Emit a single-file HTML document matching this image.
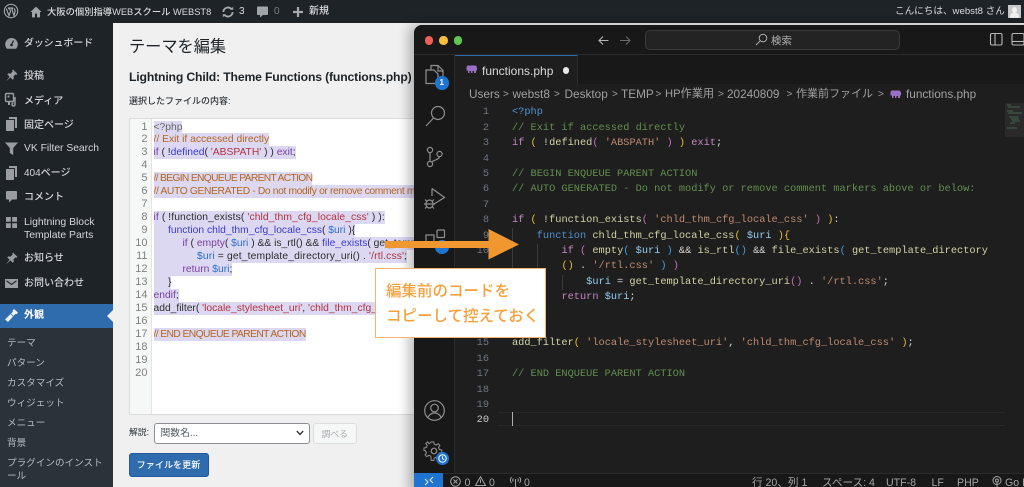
<!DOCTYPE html>
<html lang="ja"><head><meta charset="utf-8"><title>テーマを編集</title>
<style>
html,body{margin:0;padding:0;width:1024px;height:487px;overflow:hidden;background:#f0f0f1}
#p{position:relative;width:1024px;height:487px;overflow:hidden;font-family:"Liberation Sans","Noto Sans CJK JP",sans-serif;filter:blur(.3px)}
.a{position:absolute;white-space:nowrap}
svg{position:absolute;overflow:visible}
.t{color:#dcdcde;font-size:10px;line-height:14px}
.m{color:#d5d6d8;font-size:10px;line-height:14px;left:24px;font-weight:500}
.sub{color:#b4b9be;font-size:9.6px;line-height:14px;left:7px}
.ic{fill:#9a9ea3}
#wc{left:153.5px;top:120.5px;width:260px;overflow:hidden;font-size:10.3px;color:#2b2b2b}
#wc div{height:12.97px;line-height:12.97px;white-space:nowrap}
#wc span.sel{background:#dcd8f2;display:inline-block;height:13px;line-height:13px}
.wk{color:#7a3e9d}.wf{color:#3a3ad0}.wstr{color:#b3323f}.wcm{color:#b5651d}.wv{color:#2a6fc9}
#wn{left:129px;top:120.5px;width:18.5px;text-align:right;font-size:11px;line-height:12.97px;color:#808080;white-space:pre}
#vs{position:absolute;left:414px;top:25px;width:620px;height:470px;background:#1e1e1e;border-radius:8px 0 0 0;box-shadow:-5px 0 12px rgba(0,0,0,.28)}
#code{left:512px;top:105.3px;margin:0;font:10.3px/15.4px "Liberation Mono",monospace;color:#d4d4d4;white-space:pre}
#ln{left:470px;width:19px;top:105.3px;margin:0;font:10.3px/15.4px "Liberation Mono",monospace;color:#6e7681;text-align:right;white-space:pre}
.k{color:#c586c0}.y{color:#e6bf2c}.b{color:#3b9ee8}.p{color:#c86cc4}.s{color:#c08a70}.c{color:#628f4e}.f{color:#d3d3a5}.v{color:#93cdf0}.d{color:#4f92cf}
.st{color:#a4a4a4;font-size:10.6px;line-height:14px;top:475.5px}
.bc{color:#a0a0a0;font-size:11.8px;line-height:14px;top:87px}
.sp{color:#a0a0a0;font-size:10px;line-height:14px;top:87.5px}
.vi{fill:none;stroke:#8f8f8f;stroke-width:1.2}
</style></head><body><div id="p">

<!-- admin bar -->
<div class="a" style="left:0;top:0;width:1024px;height:23px;background:#1d2327"></div>
<svg style="left:3px;top:3px" width="16" height="16" viewBox="0 0 16 16"><circle cx="8" cy="8" r="6.7" fill="none" stroke="#a0a5aa" stroke-width="1.1"/><path d="M3.3 5.6 6 12.6 7.5 8.2 6.5 5.5H5.6V5h4v.5H8.6L11 12.5l1-3.5c.4-1.6-.2-2.6-.8-3.6" fill="none" stroke="#a0a5aa" stroke-width="1.2"/></svg>
<svg style="left:30px;top:6px" width="12" height="12" viewBox="0 0 12 12"><path d="M6 .6.4 6H2v5.4h3V7.6h2v3.8h3V6h1.6z" fill="#a0a5aa"/></svg>
<div class="a t" style="left:47px;top:5px;font-size:9.3px;font-weight:500">大阪の個別指導WEBスクール WEBST8</div>
<svg style="left:222px;top:6px" width="12" height="12" viewBox="0 0 12 12"><path d="M1.4 6a4.6 4.6 0 0 1 8-3M10.6 6a4.6 4.6 0 0 1-8 3" fill="none" stroke="#a7aaad" stroke-width="1.8"/><path d="M8 3.8h3.2V.8zM4 8.2H.8v3z" fill="#a7aaad"/></svg>
<div class="a t" style="left:239px;top:5px;font-size:10px">3</div>
<svg style="left:257px;top:6px" width="11" height="12" viewBox="0 0 11 12"><path d="M1 .5h9a1 1 0 0 1 1 1V8a1 1 0 0 1-1 1H6L3 11.5V9H1a1 1 0 0 1-1-1V1.500a1 1 0 0 1 1-1z" fill="#a0a5aa"/></svg>
<div class="a t" style="left:274px;top:5px;color:#787c82">0</div>
<svg style="left:293px;top:7px" width="10" height="10"><path d="M5 0v10M0 5h10" stroke="#a7aaad" stroke-width="2.2"/></svg>
<div class="a t" style="left:309px;top:5px;font-weight:500">新規</div>
<div class="a t" style="left:895px;top:5px;font-size:9.6px">こんにちは、webst8 さん</div>
<div class="a" style="left:1008px;top:5px;width:13px;height:13px;background:#c8c8c8"></div>
<div class="a" style="left:1012px;top:7px;width:5px;height:6px;border-radius:50%;background:#f2f2f2"></div>
<div class="a" style="left:1010px;top:13px;width:9px;height:5px;border-radius:3px 3px 0 0;background:#f2f2f2"></div>

<!-- sidebar -->
<div class="a" style="left:0;top:23px;width:113px;height:464px;background:#1d2327"></div>
<div class="a" style="left:0;top:328px;width:113px;height:159px;background:#2c3338"></div>
<div class="a" style="left:0;top:304px;width:113px;height:24px;background:#2f6cae"></div>
<svg style="left:107px;top:310px" width="6" height="12"><path d="M6 0 0 6l6 6z" fill="#f0f0f1"/></svg>

<svg style="left:5px;top:38px" width="13" height="11" viewBox="0 0 13 11"><path d="M6.500 0A6.300 6.300 0 0 0 .2 6.300c0 1.800.7 3.400 1.800 4.500h9c1.100-1.100 1.800-2.700 1.800-4.500A6.300 6.300 0 0 0 6.500 0z" class="ic"/><path d="M6.500 7 8.500 2.500" stroke="#1d2327" stroke-width="1.200"/><circle cx="6.500" cy="7" r="1.300" fill="#1d2327"/></svg>
<div class="a m" style="top:37px;font-size:9.900px">ダッシュボード</div>
<svg style="left:5px;top:69px" width="13" height="13" viewBox="0 0 13 13"><path d="M8 .5 12.500 5l-1 .7-1-.3-2 2 .2 2.300-1 1-2.300-2.300L.8 12.500l3.800-4.800L2.300 5.400l1-1 2.300.2 2-2-.3-1z" class="ic"/></svg>
<div class="a m" style="top:70px">投稿</div>
<svg style="left:5px;top:93px" width="13" height="14" viewBox="0 0 13 14"><rect x=".5" y=".5" width="8" height="8" rx="1" fill="none" stroke="#9a9ea3" stroke-width="1.400"/><circle cx="3.500" cy="3.500" r="1.100" class="ic"/><path d="M10 4v7.500a1.500 1.500 0 1 1-1.500-1.500" fill="none" stroke="#9a9ea3" stroke-width="1.500"/><path d="M4 9v3" stroke="#9a9ea3" stroke-width="2"/></svg>
<div class="a m" style="top:95px">メディア</div>
<svg style="left:6px;top:117px" width="11" height="14" viewBox="0 0 11 14"><path d="M3 0h8v11H9V2H3z" class="ic"/><path d="M0 3h8v11H0z" class="ic"/></svg>
<div class="a m" style="top:119px">固定ページ</div>
<svg style="left:5px;top:142px" width="13" height="13" viewBox="0 0 13 13"><path d="M0 .5h13L8.200 6v7l-3.400-2V6z" class="ic"/></svg>
<div class="a m" style="top:142px;left:24px;font-size:10.300px">VK Filter Search</div>
<svg style="left:6px;top:166px" width="11" height="14" viewBox="0 0 11 14"><path d="M3 0h8v11H9V2H3z" class="ic"/><path d="M0 3h8v11H0z" class="ic"/></svg>
<div class="a m" style="top:167px">404ページ</div>
<svg style="left:6px;top:191px" width="11" height="12" viewBox="0 0 11 12"><path d="M1 0h9a1 1 0 0 1 1 1v6.500a1 1 0 0 1-1 1H6L3 11.500v-3H1a1 1 0 0 1-1-1V1a1 1 0 0 1 1-1z" class="ic"/></svg>
<div class="a m" style="top:190.500px">コメント</div>
<svg style="left:6px;top:217px" width="11" height="11"><path d="M0 0h4.800v4.800H0zM6.200 0H11v4.800H6.200zM0 6.200h4.800V11H0zM6.200 6.200H11V11H6.200z" class="ic"/></svg>
<div class="a m" style="top:216px;font-size:10.400px;line-height:13px;white-space:normal;width:85px">Lightning Block<br>Template Parts</div>
<svg style="left:5px;top:252px" width="13" height="13" viewBox="0 0 13 13"><path d="M8 .5 12.500 5l-1 .7-1-.3-2 2 .2 2.300-1 1-2.300-2.300L.8 12.500l3.800-4.800L2.300 5.400l1-1 2.300.2 2-2-.3-1z" class="ic"/></svg>
<div class="a m" style="top:252px">お知らせ</div>
<svg style="left:5px;top:279px" width="13" height="9" viewBox="0 0 13 9"><rect width="13" height="9" class="ic"/><path d="M1.500 1.800 6.500 5.500l5-3.700" fill="none" stroke="#1d2327" stroke-width="1.100"/></svg>
<div class="a m" style="top:276.500px">お問い合わせ</div>
<svg style="left:5px;top:309px" width="13" height="13" viewBox="0 0 13 13"><path d="M7.500 1.500 9 0l4 3.500-1.500 1.800-1-.4-2 2.100L6 4.500 7.800 2.800zM5.500 5 8 7.600 3 13 0 10.500z" fill="#f0f0f1"/></svg>
<div class="a m" style="top:309px;color:#fff;font-weight:700">外観</div>

<div class="a sub" style="top:336.500px">テーマ</div>
<div class="a sub" style="top:356.500px">パターン</div>
<div class="a sub" style="top:376.500px">カスタマイズ</div>
<div class="a sub" style="top:396.500px">ウィジェット</div>
<div class="a sub" style="top:416.500px">メニュー</div>
<div class="a sub" style="top:436.500px">背景</div>
<div class="a sub" style="top:456.500px;line-height:13px">プラグインのインスト<br>ール</div>

<!-- main -->
<div class="a" style="left:129px;top:36px;font-size:16.200px;line-height:22px;color:#1d2327">テーマを編集</div>
<div class="a" style="left:129px;top:69px;font-size:12.200px;line-height:16px;color:#1d2327;font-weight:700;letter-spacing:-.15px">Lightning Child: Theme Functions (functions.php)</div>
<div class="a" style="left:129px;top:94.500px;font-size:9px;line-height:13px;color:#2c3338;font-weight:500">選択したファイルの内容:</div>

<div class="a" style="left:128.500px;top:117.500px;width:300px;height:297px;background:#fff;border:1px solid #dcdcde;box-sizing:border-box"></div>
<div class="a" style="left:129.500px;top:118.500px;width:21px;height:295px;background:#f6f7f7;border-right:1px solid #e4e4e4"></div>
<div class="a" id="wn">1
2
3
4
5
6
7
8
9
10
11
12
13
14
15
16
17
18
19
20</div>
<div class="a" id="wc">
<div><span class="sel" style="color:#666">&lt;?php</span></div>
<div><span class="sel wcm">// Exit if accessed directly</span></div>
<div><span class="sel"><span class="wk">if</span> ( !<span class="wf">defined</span>( <span class="wstr">'ABSPATH'</span> ) ) <span class="wk">exit</span>;</span></div>
<div></div>
<div><span class="sel wcm" style="letter-spacing:-.68px">// BEGIN ENQUEUE PARENT ACTION</span></div>
<div><span class="sel wcm" style="letter-spacing:-.37px;padding-right:20px">// AUTO GENERATED - Do not modify or remove comment markers</span></div>
<div></div>
<div style="letter-spacing:.1px"><span class="sel"><span class="wk">if</span> ( !function_exists( <span class="wstr">'chld_thm_cfg_locale_css'</span> ) ):</span></div>
<div><span class="sel" style="padding-left:14.500px"><span class="wf">function</span> <span class="wf">chld_thm_cfg_locale_css</span>( <span class="wv">$uri</span> ){</span></div>
<div><span class="sel" style="padding-left:29px;padding-right:80px"><span class="wk">if</span> ( <span class="wk">empty</span>( <span class="wv">$uri</span> ) &amp;&amp; is_rtl() &amp;&amp; <span class="wf">file_exists</span>( get_template</span></div>
<div style="letter-spacing:.15px"><span class="sel" style="padding-left:43.500px"><span class="wv">$uri</span> = get_template_directory_uri() . <span class="wstr">'/rtl.css'</span>;</span></div>
<div><span class="sel" style="padding-left:29px"><span class="wk">return</span> <span class="wv">$uri</span>;</span></div>
<div><span class="sel" style="padding-left:14.500px">}</span></div>
<div><span class="sel wk">endif</span><span class="sel">;</span></div>
<div><span class="sel">add_filter( <span class="wstr">'locale_stylesheet_uri'</span>, <span class="wstr">'chld_thm_cfg_locale_css'</span> );</span></div>
<div></div>
<div><span class="sel wcm" style="letter-spacing:-.6px">// END ENQUEUE PARENT ACTION</span></div>
</div>

<div class="a" style="left:129px;top:425.500px;font-size:8.800px;line-height:13px;color:#2c3338">解説:</div>
<div class="a" style="left:153.500px;top:422.500px;width:156px;height:21px;background:#fff;border:1px solid #8c8f94;border-radius:3px;box-sizing:border-box;font-size:9.800px;line-height:20px;color:#50575e;padding-left:6px">関数名...</div>
<svg style="left:296px;top:430px" width="8" height="6"><path d="M.8 1 4 4.500 7.200 1" fill="none" stroke="#2c3338" stroke-width="1.300"/></svg>
<div class="a" style="left:313px;top:422.500px;width:43.500px;height:21px;background:#f6f7f7;border:1px solid #dcdcde;border-radius:3px;box-sizing:border-box;font-size:8.800px;line-height:20px;color:#a7aaad;text-align:center">調べる</div>
<div class="a" style="left:128.500px;top:453px;width:80px;height:24px;background:#2f6cae;border:1px solid #24589a;border-radius:3px;box-sizing:border-box;font-size:9.100px;line-height:23px;color:#fff;text-align:center;font-weight:500">ファイルを更新</div>

<!-- VS Code -->
<div id="vs"></div>
<div class="a" style="left:414px;top:25px;width:610px;height:30px;background:#181818;border-radius:8px 0 0 0;border-bottom:1px solid #2b2b2b;box-sizing:border-box"></div>
<div class="a" style="left:414px;top:55px;width:41px;height:418px;background:#181818;border-right:1px solid #2b2b2b;box-sizing:border-box"></div>
<div class="a" style="left:455px;top:55px;width:569px;height:29px;background:#181818"></div>
<div class="a" style="left:455px;top:55px;width:123px;height:29px;background:#1e1e1e;border-top:1px solid #2a6aa8;border-right:1px solid #2b2b2b;box-sizing:border-box"></div>
<div class="a" style="left:414px;top:473px;width:610px;height:14px;background:#181818;border-top:1px solid #2b2b2b;box-sizing:border-box"></div>
<div class="a" style="left:424.500px;top:36px;width:8.500px;height:8.500px;border-radius:50%;background:#ee5f57"></div>
<div class="a" style="left:439px;top:36px;width:8.500px;height:8.500px;border-radius:50%;background:#f6be3f"></div>
<div class="a" style="left:453.500px;top:36px;width:8.500px;height:8.500px;border-radius:50%;background:#5fc650"></div>
<svg style="left:598px;top:35px" width="40" height="11"><path d="M10.500 5.500H1M5 1.500l-4 4 4 4" fill="none" stroke="#b5b5b5" stroke-width="1.100"/><path d="M22 5.500h10M28 1.500l4 4-4 4" fill="none" stroke="#6a6a6a" stroke-width="1.100"/></svg>
<div class="a" style="left:645px;top:29.500px;width:255px;height:20px;background:#232323;border:1px solid #3a3a3a;border-radius:5px;box-sizing:border-box"></div>
<svg style="left:755px;top:33px" width="13" height="13" viewBox="0 0 13 13"><circle cx="8" cy="5" r="3.800" fill="none" stroke="#b0b0b0"/><path d="M5.200 7.800 1 12" stroke="#b0b0b0"/></svg>
<div class="a" style="left:771px;top:33.500px;font-size:10.500px;line-height:14px;color:#b0b0b0">検索</div>
<svg style="left:990px;top:33px" width="34" height="13"><rect x=".5" y=".5" width="11.500" height="11.500" rx="1.500" fill="none" stroke="#b8b8b8" stroke-width="1.100"/><path d="M5 .5v11.500" stroke="#b8b8b8" stroke-width="1.100"/><rect x="22" y=".5" width="12" height="11.500" rx="1.500" fill="none" stroke="#b8b8b8" stroke-width="1.100"/><path d="M22 8.500h12" stroke="#b8b8b8" stroke-width="1.100"/></svg>

<!-- activity icons -->
<svg style="left:425px;top:64px" width="22" height="24" viewBox="0 0 22 24"><path d="M6 5.500V1.500h7l5 5V17h-4" class="vi" stroke-width="1.200"/><path d="M1 6h8l4 4v9.500H1z" class="vi"/><path d="M13 1.500V7h5" class="vi"/></svg>
<div class="a" style="left:435px;top:76px;width:13.500px;height:13.500px;border-radius:50%;background:#1f74d0;color:#fff;font-size:8px;line-height:13.500px;text-align:center;font-weight:700">1</div>
<svg style="left:425px;top:105px" width="21" height="22" viewBox="0 0 21 22"><circle cx="13" cy="8" r="6.500" class="vi"/><path d="M8.500 13 1 21" class="vi"/></svg>
<svg style="left:426px;top:146px" width="18" height="22" viewBox="0 0 18 22"><circle cx="4" cy="4" r="2.600" class="vi"/><circle cx="4" cy="18" r="2.600" class="vi"/><circle cx="13.500" cy="8" r="2.600" class="vi"/><path d="M4 6.600v8.800M13.500 10.600c0 2.500-4 3-7.500 5" class="vi"/></svg>
<svg style="left:424px;top:187px" width="22" height="23" viewBox="0 0 22 23"><path d="M8 1.500 20.500 10.500 10 17M8 1.500V9" class="vi"/><ellipse cx="5.500" cy="17" rx="3.600" ry="4" class="vi"/><path d="M0 17h11M1 12.500l2 2M10 12.500l-2 2M1 21.500l2-2M10 21.500l-2-2" class="vi"/></svg>
<svg style="left:425px;top:229px" width="22" height="20" viewBox="0 0 22 20"><rect x="1" y="6" width="8" height="12" class="vi"/><rect x="12" y="1" width="7.500" height="7.500" rx="1" class="vi"/></svg>
<div class="a" style="left:435px;top:240px;width:13.500px;height:13.500px;border-radius:50%;background:#1f74d0"></div>
<svg style="left:424px;top:400px" width="21" height="21" viewBox="0 0 21 21"><circle cx="10.500" cy="10.500" r="9.800" class="vi"/><circle cx="10.500" cy="8" r="3.800" class="vi"/><path d="M3.800 17.500c1.500-3 4-4.500 6.700-4.500s5.200 1.500 6.700 4.500" class="vi"/></svg>
<svg style="left:424px;top:441px" width="22" height="22" viewBox="0 0 22 22"><circle cx="10" cy="10" r="2.800" class="vi"/><path d="M8.500 1h3l.5 2.800 2.300 1 2.400-1.600 2 2.100-1.600 2.400 1 2.300 2.800.5v3l-2.800.5-1 2.300 1.600 2.400-2 2-2.400-1.600-2.300 1-.5 2.800h-3L8 17.800l-2.300-1-2.400 1.600-2-2 1.600-2.400-1-2.300L0 11.200v-3l2.800-.5 1-2.300L2.100 3l2.100-2L6 3.200z" transform="scale(.85)" class="vi" stroke-width="1.300"/></svg>
<div class="a" style="left:435.500px;top:452px;width:13px;height:13px;border-radius:50%;background:#1f74d0;border:0 solid"></div>
<svg style="left:437.500px;top:454px" width="9" height="9"><circle cx="4.500" cy="4.500" r="3.700" fill="none" stroke="#fff"/><path d="M4.500 2.300v2.400l1.700 1" fill="none" stroke="#fff" stroke-width=".9"/></svg>

<!-- tab -->
<svg style="left:466px;top:65px" width="11" height="9" viewBox="0 0 11 9"><path d="M2.500.5h6c1.500 0 2.500 1 2.500 2.500v2.500h-1V8H8V6H6.500v2H5V6H3.500v2H2V5.500H.5V3C.5 1.500 1 .5 2.500.5z" fill="#9b6fc4"/></svg>
<div class="a" style="left:482px;top:63.500px;font-size:12px;line-height:14px;color:#d8d8d8">functions.php</div>
<div class="a" style="left:562.500px;top:67px;width:6.500px;height:6.500px;border-radius:50%;background:#e8e8e8"></div>

<!-- breadcrumbs -->
<div class="a bc" style="left:469px">Users</div><div class="a sp" style="left:503px">&gt;</div>
<div class="a bc" style="left:512.500px">webst8</div><div class="a sp" style="left:554px">&gt;</div>
<div class="a bc" style="left:564.500px">Desktop</div><div class="a sp" style="left:612px">&gt;</div>
<div class="a bc" style="left:621px">TEMP</div><div class="a sp" style="left:655.500px">&gt;</div>
<div class="a bc" style="left:665px;font-size:11.200px">HP作業用</div><div class="a sp" style="left:718px">&gt;</div>
<div class="a bc" style="left:727px">20240809</div><div class="a sp" style="left:786.500px">&gt;</div>
<div class="a bc" style="left:796px;font-size:11px">作業前ファイル</div><div class="a sp" style="left:878px">&gt;</div>
<svg style="left:890px;top:90px" width="11" height="9" viewBox="0 0 11 9"><path d="M2.500.5h6c1.500 0 2.500 1 2.500 2.500v2.500h-1V8H8V6H6.500v2H5V6H3.500v2H2V5.500H.5V3C.5 1.500 1 .5 2.500.5z" fill="#9b6fc4"/></svg>
<div class="a bc" style="left:906px">functions.php</div>

<!-- minimap -->
<div class="a" style="left:1005px;top:103px;width:19px;height:34px;background:#2a2a2a"></div>
<svg style="left:1006px;top:104px" width="17" height="26"><path d="M1 1h4M2 3h12M1 7h6M2 9h14M3 13h9M5 15h8M6 17h8M4 19h5M1 24h10" stroke="#46604a" stroke-width="1"/></svg>

<!-- indent guides + current line -->
<div class="a" style="left:512px;top:228px;width:1px;height:108px;background:#3a3a3a"></div>
<div class="a" style="left:537px;top:244px;width:1px;height:60px;background:#3a3a3a"></div>
<div class="a" style="left:561.500px;top:275px;width:1px;height:15px;background:#3a3a3a"></div>
<div class="a" style="left:498px;top:411.500px;width:507px;height:14.500px;border-top:1px solid #282828;border-bottom:1px solid #282828;box-sizing:border-box"></div>
<div class="a" style="left:511.500px;top:412px;width:1.500px;height:14px;background:#aeafad"></div>

<pre class="a" id="ln">1
2
3
4
5
6
7
8
9
10

11
12
13
14
15
16
17
18
19
<span style="color:#ccc">20</span></pre>
<pre class="a" id="code"><span class="d">&lt;?php</span>
<span class="c">// Exit if accessed directly</span>
<span class="k">if</span> <span class="y">(</span> !<span class="f">defined</span><span class="p">(</span> <span class="s">'ABSPATH'</span> <span class="p">)</span> <span class="y">)</span> <span class="k">exit</span>;

<span class="c">// BEGIN ENQUEUE PARENT ACTION</span>
<span class="c">// AUTO GENERATED - Do not modify or remove comment markers above or below:</span>

<span class="k">if</span> <span class="y">(</span> !<span class="f">function_exists</span><span class="p">(</span> <span class="s">'chld_thm_cfg_locale_css'</span> <span class="p">)</span> <span class="y">)</span>:
    <span class="d">function</span> <span class="f">chld_thm_cfg_locale_css</span><span class="y">(</span> <span class="v">$uri</span> <span class="y">){</span>
        <span class="k">if</span> <span class="p">(</span> <span class="f">empty</span><span class="b">(</span> <span class="v">$uri</span> <span class="b">)</span> &amp;&amp; <span class="f">is_rtl</span><span class="b">()</span> &amp;&amp; <span class="f">file_exists</span><span class="b">(</span> <span class="f">get_template_directory</span>
        <span class="y">()</span> . <span class="s">'/rtl.css'</span> <span class="b">)</span> <span class="p">)</span>
            <span class="v">$uri</span> = <span class="f">get_template_directory_uri</span><span class="p">()</span> . <span class="s">'/rtl.css'</span>;
        <span class="k">return</span> <span class="v">$uri</span>;


<span class="f">add_filter</span><span class="y">(</span> <span class="s">'locale_stylesheet_uri'</span>, <span class="s">'chld_thm_cfg_locale_css'</span> <span class="y">)</span>;

<span class="c">// END ENQUEUE PARENT ACTION</span></pre>

<!-- status bar -->
<div class="a" style="left:414px;top:473px;width:29px;height:14px;background:#1f74d0"></div>
<svg style="left:424px;top:476px" width="10" height="10"><path d="M1 9 4 6 1 3M9 1 6 4l3 3" fill="none" stroke="#e8e8e8" stroke-width="1"/></svg>
<svg style="left:450px;top:476px" width="11" height="11"><circle cx="5.500" cy="5.500" r="4.800" fill="none" stroke="#a4a4a4"/><path d="M3.500 3.500l4 4M7.500 3.500l-4 4" stroke="#a4a4a4"/></svg>
<div class="a st" style="left:464.500px">0</div>
<svg style="left:475px;top:476px" width="11" height="10"><path d="M5.500.7 10.500 9.500H.5z" fill="none" stroke="#a4a4a4"/><path d="M5.500 3.500v3.500" stroke="#a4a4a4"/></svg>
<div class="a st" style="left:489px">0</div>
<svg style="left:510px;top:476px" width="11" height="11"><path d="M5.500 3v8M1.500 1c-1.500 2-1.500 4 0 6M9.500 1c1.500 2 1.500 4 0 6M3.300 2.500c-.8 1-.8 2 0 3M7.700 2.500c.8 1 .8 2 0 3" fill="none" stroke="#a4a4a4"/></svg>
<div class="a st" style="left:524px">0</div>
<div class="a st" style="left:752px">行 20、列 1</div>
<div class="a st" style="left:822px">スペース: 4</div>
<div class="a st" style="left:886px">UTF-8</div>
<div class="a st" style="left:931.500px">LF</div>
<div class="a st" style="left:957px">PHP</div>
<svg style="left:992px;top:476px" width="10" height="11"><circle cx="5" cy="4.500" r="4" fill="none" stroke="#a4a4a4"/><circle cx="5" cy="4.500" r="1.500" fill="none" stroke="#a4a4a4"/><path d="M5 6v5" stroke="#a4a4a4"/></svg>
<div class="a st" style="left:1005px">Go Live</div>

<!-- overlay arrow + callout -->
<div class="a" style="left:385px;top:240.500px;width:104px;height:7.500px;background:#f0982f"></div>
<svg style="left:488px;top:229px" width="34" height="31"><path d="M.5 0 31 15.500 .5 30.500z" fill="#f0982f"/></svg>
<div class="a" style="left:375px;top:268px;width:170.500px;height:70px;background:#fff;border:1.500px solid #f5b46c;box-sizing:border-box"></div>
<div class="a" style="left:386px;top:279px;font-size:15.500px;line-height:25px;color:#f4a03c;font-weight:500">編集前のコードを<br>コピーして控えておく</div>

</div></body></html>
